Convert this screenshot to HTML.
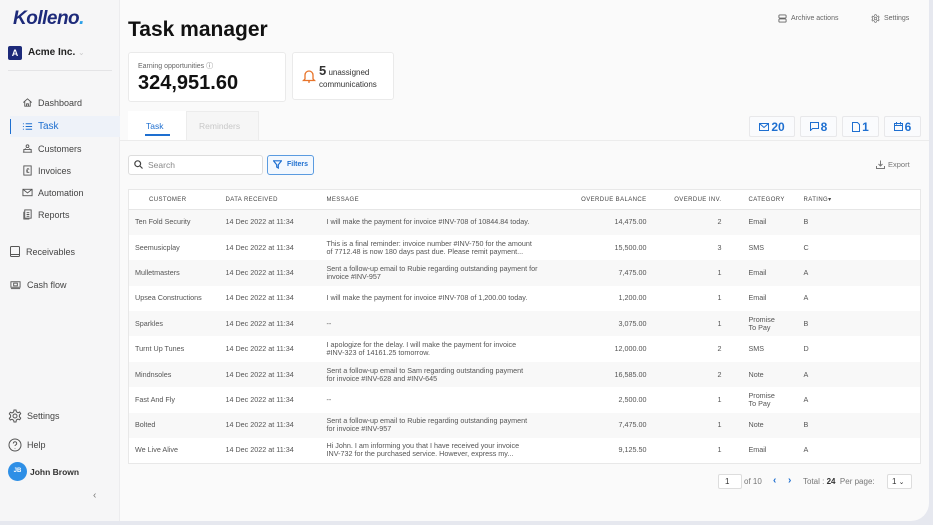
<!DOCTYPE html>
<html><head><meta charset="utf-8"><style>
*{box-sizing:border-box;margin:0;padding:0}
body{width:933px;height:525px;overflow:hidden;background:#e6e8ef;font-family:"Liberation Sans",sans-serif;color:#222;position:relative}
.app{position:absolute;left:0;top:0;width:929px;height:521px;background:#fafafa;border-radius:0 0 18px 0;overflow:hidden}
.side{position:absolute;left:0;top:0;width:120px;height:521px;background:#f6f6f7;border-right:1px solid #ececee}
.abs{position:absolute;white-space:nowrap}
.nav{position:absolute;left:22px;font-size:9px;color:#444;display:flex;align-items:center;gap:5px}
.nav svg{width:11px;height:11px}
.card{position:absolute;background:#fff;border:1px solid #eaeaea;border-radius:3px}
.cnt{position:absolute;top:116px;height:21px;background:#fafbfd;border:1px solid #e8e8ea;border-radius:2px;color:#1e6fd0;font-weight:bold;font-size:12px;display:flex;align-items:center;justify-content:center;gap:2px}
table{position:absolute;left:128px;top:189px;width:793px;border-collapse:collapse;background:#fff;border:1px solid #e8e8e8;font-size:7.2px;color:#555}
th{height:20px;font-size:6px;letter-spacing:.4px;color:#444;font-weight:normal;text-align:left;border-bottom:1px solid #e6e6e6}
td{height:25.4px;line-height:8px;vertical-align:middle}
tr:nth-child(even) td{background:#f8f8f8}
.r{text-align:right}
</style></head><body>
<div class="app">
<div class="side">
 <div class="abs" style="left:13px;top:8px;font-size:19px;font-weight:bold;font-style:italic;color:#1d2a7a;letter-spacing:-.5px">Kolleno<span style="color:#2aa0e8">.</span></div>
 <div class="abs" style="left:8px;top:46px;width:14px;height:14px;background:#1d2a7a;color:#fff;font-size:9px;font-weight:bold;text-align:center;line-height:14px;border-radius:2px">A</div>
 <div class="abs" style="left:28px;top:47px;font-size:10px;font-weight:bold;color:#222">Acme Inc. <span style="color:#ccc;font-weight:normal;font-size:8px">&#8964;</span></div>
 <div class="abs" style="left:8px;top:70px;width:104px;height:1px;background:#e4e4e6"></div>
 <div class="abs" style="left:10px;top:116px;width:110px;height:21px;background:#eef2f9"></div>
 <div class="abs" style="left:10px;top:119px;width:1px;height:15px;background:#1e6fd0"></div>
 <div class="nav" style="top:97px"><svg viewBox="0 0 12 12" fill="none" stroke="#555"><path d="M1.5 6L6 2l4.5 4M3 5v5h6V5M5 10V7.5h2V10"/></svg>Dashboard</div>
 <div class="nav" style="top:121px;font-size:10px;color:#1e6fd0"><svg viewBox="0 0 12 12" stroke="#1e6fd0"><path d="M1 3h1M4 3h7M1 6h1M4 6h7M1 9h1M4 9h7"/></svg>Task</div>
 <div class="nav" style="top:143px"><svg viewBox="0 0 12 12" fill="none" stroke="#555"><circle cx="6" cy="3.5" r="1.5"/><path d="M1 10h10M2 10V7h8v3M3 7l1-1M9 7L8 6"/></svg>Customers</div>
 <div class="nav" style="top:165px"><svg viewBox="0 0 12 12" fill="none" stroke="#555"><rect x="2" y="1" width="8" height="10"/><path d="M5 8h3M5.5 8V5a1 1 0 012 0M4.5 6.5h2"/></svg>Invoices</div>
 <div class="nav" style="top:187px"><svg viewBox="0 0 12 12" fill="none" stroke="#555"><rect x="1" y="2.5" width="10" height="7"/><path d="M1 2.5l5 4 5-4"/></svg>Automation</div>
 <div class="nav" style="top:209px"><svg viewBox="0 0 12 12" fill="none" stroke="#555"><rect x="3" y="1" width="7" height="9"/><path d="M2 3v8h6M5 4h3M5 6h3M5 8h3"/></svg>Reports</div>
 <div class="nav" style="left:9px;top:245px;font-size:9px"><svg viewBox="0 0 12 12" fill="none" stroke="#555" style="width:12px;height:13px"><rect x="1.5" y="1" width="9" height="10" rx="1"/><path d="M1.5 9h9"/></svg>Receivables</div>
 <div class="nav" style="left:9px;top:279px"><svg viewBox="0 0 12 12" fill="none" stroke="#555" style="width:13px"><rect x="1" y="3" width="10" height="6"/><rect x="4" y="4.5" width="4" height="3"/><path d="M1 10.5h10"/></svg>Cash flow</div>
 <div class="nav" style="left:8px;top:409px;font-size:9px"><svg viewBox="0 0 14 14" fill="none" stroke="#555" style="width:14px;height:14px"><circle cx="7" cy="7" r="2"/><path d="M6 1h2l.4 1.8 1.6.9 1.7-.7 1 1.7-1.3 1.3v1.8l1.3 1.3-1 1.7-1.7-.7-1.6.9L8 13H6l-.4-1.8-1.6-.9-1.7.7-1-1.7L2.6 8V6.2L1.3 4.9l1-1.7 1.7.7 1.6-.9z"/></svg>Settings</div>
 <div class="nav" style="left:8px;top:438px;font-size:9px"><svg viewBox="0 0 14 14" fill="none" stroke="#555" style="width:14px;height:14px"><circle cx="7" cy="7" r="6"/><path d="M5.3 5.5a1.7 1.7 0 113 1c-.7.5-1.3.7-1.3 1.5M7 10v.5"/></svg>Help</div>
 <div class="abs" style="left:8px;top:462px;width:19px;height:19px;border-radius:50%;background:#2e8fe6;color:#fff;font-size:6px;font-weight:bold;text-align:center;line-height:19px">JB</div>
 <div class="abs" style="left:30px;top:467px;font-size:8.5px;font-weight:bold;color:#333">John Brown</div>
 <div class="abs" style="left:93px;top:490px;font-size:10px;color:#777">&#8249;</div>
</div>

<div class="abs" style="left:128px;top:18px;font-size:21px;font-weight:bold;color:#111">Task manager</div>
<div class="abs" style="left:778px;top:14px;font-size:7px;color:#666;display:flex;align-items:center;gap:4px"><svg width="9" height="9" viewBox="0 0 10 10" fill="none" stroke="#666"><rect x="1" y="1" width="8" height="3.5" rx="1"/><rect x="1" y="5.5" width="8" height="3.5" rx="1"/></svg>Archive actions</div>
<div class="abs" style="left:871px;top:14px;font-size:7px;color:#666;display:flex;align-items:center;gap:4px"><svg width="9" height="9" viewBox="0 0 14 14" fill="none" stroke="#666"><circle cx="7" cy="7" r="2"/><path d="M6 1h2l.4 1.8 1.6.9 1.7-.7 1 1.7-1.3 1.3v1.8l1.3 1.3-1 1.7-1.7-.7-1.6.9L8 13H6l-.4-1.8-1.6-.9-1.7.7-1-1.7L2.6 8V6.2L1.3 4.9l1-1.7 1.7.7 1.6-.9z"/></svg>Settings</div>

<div class="card" style="left:128px;top:52px;width:158px;height:50px">
 <div class="abs" style="left:9px;top:8px;font-size:7px;color:#666">Earning opportunities &#9432;</div>
 <div class="abs" style="left:9px;top:19px;font-size:20px;font-weight:bold;color:#111">324,951.60</div>
</div>
<div class="card" style="left:292px;top:52px;width:102px;height:48px">
 <svg class="abs" style="left:9px;top:15px" width="14" height="16" viewBox="0 0 14 16" fill="none" stroke="#e8742a" stroke-width="1.3"><path d="M3 11V7a4 4 0 018 0v4l1.5 1.5h-11zM6 14h2"/></svg>
 <div class="abs" style="left:26px;top:10px;font-size:8px;color:#333"><b style="font-size:13px">5</b> unassigned</div>
 <div class="abs" style="left:26px;top:27px;font-size:8px;color:#333">communications</div>
</div>

<div class="abs" style="left:128px;top:111px;width:58px;height:30px;background:#fff"></div>
<div class="abs" style="left:146px;top:121px;font-size:8.5px;color:#1e6fd0">Task</div>
<div class="abs" style="left:145px;top:134px;width:25px;height:1.5px;background:#1e6fd0"></div>
<div class="abs" style="left:186px;top:111px;width:73px;height:29px;background:#f6f6f6;border:1px solid #ececec;border-bottom:none"></div>
<div class="abs" style="left:199px;top:121px;font-size:8.5px;color:#c8c8c8">Reminders</div>
<div class="abs" style="left:120px;top:140px;width:809px;height:1px;background:#ececec"></div>

<div class="cnt" style="left:749px;width:46px"><svg width="10" height="8" viewBox="0 0 10 8" fill="none" stroke="#1e6fd0"><rect x=".5" y=".5" width="9" height="7"/><path d="M.5 .5l4.5 4 4.5-4"/></svg>20</div>
<div class="cnt" style="left:800px;width:37px"><svg width="9" height="9" viewBox="0 0 9 9" fill="none" stroke="#1e6fd0"><path d="M.5.5h8v6h-6l-2 2z"/></svg>8</div>
<div class="cnt" style="left:842px;width:37px"><svg width="8" height="10" viewBox="0 0 8 10" fill="none" stroke="#1e6fd0"><path d="M.5.5h5l2 2v7h-7z"/></svg>1</div>
<div class="cnt" style="left:884px;width:37px"><svg width="9" height="9" viewBox="0 0 9 9" fill="none" stroke="#1e6fd0"><rect x=".5" y="1.5" width="8" height="7"/><path d="M.5 3.5h8M2.5 0v2.5M6.5 0v2.5"/></svg>6</div>

<div class="abs" style="left:128px;top:155px;width:135px;height:20px;background:#fff;border:1px solid #ddd;border-radius:3px"></div>
<svg class="abs" style="left:134px;top:160px" width="9" height="9" viewBox="0 0 9 9" fill="none" stroke="#444" stroke-width="1.2"><circle cx="3.7" cy="3.7" r="2.9"/><path d="M6 6l2.5 2.5"/></svg>
<div class="abs" style="left:148px;top:160px;font-size:8.5px;color:#888">Search</div>
<div class="abs" style="left:267px;top:155px;width:47px;height:20px;background:#f3f8fe;border:1px solid #5a9be0;border-radius:3px"></div>
<svg class="abs" style="left:273px;top:160px" width="9" height="9" viewBox="0 0 9 9" fill="none" stroke="#1e6fd0" stroke-width="1.2"><path d="M.5.8h8L5.3 4.8V8L3.7 7V4.8z"/></svg>
<div class="abs" style="left:287px;top:161px;font-size:7px;font-weight:bold;color:#1e6fd0">Filters</div>
<div class="abs" style="left:876px;top:160px;font-size:7.5px;color:#777;display:flex;gap:3px;align-items:center"><svg width="9" height="9" viewBox="0 0 9 9" fill="none" stroke="#777"><path d="M4.5 .5v5.5M2.5 4l2 2 2-2M.5 6v2.5h8V6"/></svg>Export</div>

<table>
<tr><th style="width:97px;padding-left:20px">CUSTOMER</th><th style="width:101px">DATA RECEIVED</th><th style="width:238px">MESSAGE</th><th class="r" style="width:82px">OVERDUE BALANCE</th><th class="r" style="width:75px">OVERDUE INV.</th><th style="width:27px"></th><th style="width:55px">CATEGORY</th><th>RATING&#9662;</th></tr>
<tr><td style="padding-left:6px">Ten Fold Security</td><td>14 Dec 2022 at 11:34</td><td>I will make the payment for invoice #INV-708 of 10844.84 today.</td><td class="r">14,475.00</td><td class="r">2</td><td></td><td>Email</td><td>B</td></tr>
<tr><td style="padding-left:6px">Seemusicplay</td><td>14 Dec 2022 at 11:34</td><td>This is a final reminder: invoice number #INV-750 for the amount<br>of 7712.48 is now 180 days past due. Please remit payment...</td><td class="r">15,500.00</td><td class="r">3</td><td></td><td>SMS</td><td>C</td></tr>
<tr><td style="padding-left:6px">Mulletmasters</td><td>14 Dec 2022 at 11:34</td><td>Sent a follow-up email to Rubie regarding outstanding payment for<br>invoice #INV-957</td><td class="r">7,475.00</td><td class="r">1</td><td></td><td>Email</td><td>A</td></tr>
<tr><td style="padding-left:6px">Upsea Constructions</td><td>14 Dec 2022 at 11:34</td><td>I will make the payment for invoice #INV-708 of 1,200.00 today.</td><td class="r">1,200.00</td><td class="r">1</td><td></td><td>Email</td><td>A</td></tr>
<tr><td style="padding-left:6px">Sparkles</td><td>14 Dec 2022 at 11:34</td><td>--</td><td class="r">3,075.00</td><td class="r">1</td><td></td><td>Promise<br>To Pay</td><td>B</td></tr>
<tr><td style="padding-left:6px">Turnt Up Tunes</td><td>14 Dec 2022 at 11:34</td><td>I apologize for the delay. I will make the payment for invoice<br>#INV-323 of 14161.25 tomorrow.</td><td class="r">12,000.00</td><td class="r">2</td><td></td><td>SMS</td><td>D</td></tr>
<tr><td style="padding-left:6px">Mindnsoles</td><td>14 Dec 2022 at 11:34</td><td>Sent a follow-up email to Sam regarding outstanding payment<br>for invoice #INV-628 and #INV-645</td><td class="r">16,585.00</td><td class="r">2</td><td></td><td>Note</td><td>A</td></tr>
<tr><td style="padding-left:6px">Fast And Fly</td><td>14 Dec 2022 at 11:34</td><td>--</td><td class="r">2,500.00</td><td class="r">1</td><td></td><td>Promise<br>To Pay</td><td>A</td></tr>
<tr><td style="padding-left:6px">Bolted</td><td>14 Dec 2022 at 11:34</td><td>Sent a follow-up email to Rubie regarding outstanding payment<br>for invoice #INV-957</td><td class="r">7,475.00</td><td class="r">1</td><td></td><td>Note</td><td>B</td></tr>
<tr><td style="padding-left:6px">We Live Alive</td><td>14 Dec 2022 at 11:34</td><td>Hi John. I am informing you that I have received your invoice<br>INV-732 for the purchased service. However, express my...</td><td class="r">9,125.50</td><td class="r">1</td><td></td><td>Email</td><td>A</td></tr>
</table>

<div class="abs" style="left:718px;top:474px;width:24px;height:15px;background:#fff;border:1px solid #ddd;border-radius:2px;font-size:8px;padding:2px 0 0 6px;color:#333">1</div>
<div class="abs" style="left:744px;top:477px;font-size:8px;color:#777">of 10</div>
<div class="abs" style="left:773px;top:475px;font-size:10px;color:#1e6fd0;font-weight:bold">&#8249;</div>
<div class="abs" style="left:788px;top:475px;font-size:10px;color:#1e6fd0;font-weight:bold">&#8250;</div>
<div class="abs" style="left:803px;top:477px;font-size:8px;color:#777">Total : <b style="color:#333">24</b>&nbsp; Per page:</div>
<div class="abs" style="left:887px;top:474px;width:25px;height:15px;background:#fff;border:1px solid #ddd;border-radius:2px;font-size:8px;padding:2px 0 0 4px;color:#333">1 <span style="font-size:7px">&#8964;</span></div>
</div>
</body></html>
